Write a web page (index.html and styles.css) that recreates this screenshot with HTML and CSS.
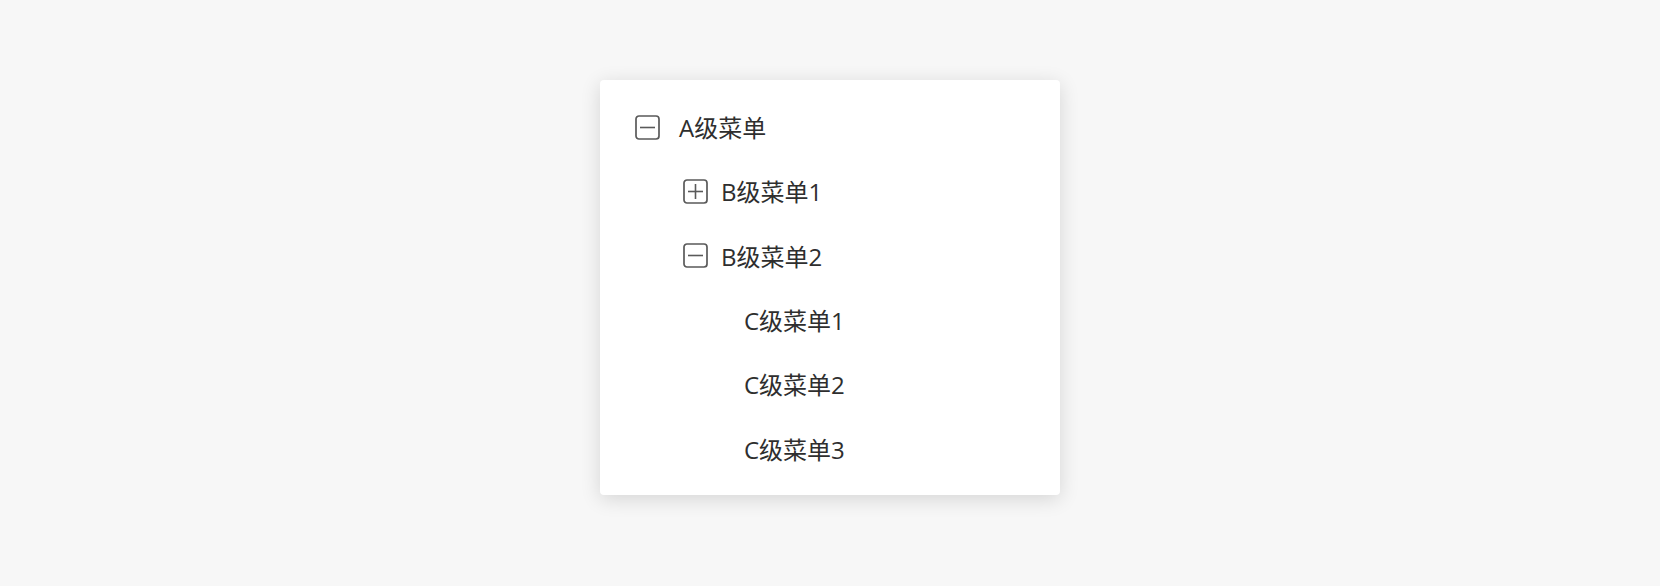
FILE: index.html
```html
<!DOCTYPE html>
<html lang="zh-CN">
<head>
<meta charset="utf-8">
<title>树形菜单</title>
<link rel="stylesheet" href="styles.css">
</head>
<body>
<div class="page">
  <div class="tree">
    <div class="row level-a">
      <span class="toggle">
        <svg viewBox="0 0 25 25" width="25" height="25"><rect x="1" y="1" width="23" height="23" rx="3" ry="3" fill="none" stroke="#5a5a5a" stroke-width="1.7"/><line x1="5" y1="12.5" x2="20" y2="12.5" stroke="#5a5a5a" stroke-width="1.6"/></svg>
      </span>
      <span class="label">A级菜单</span>
    </div>
    <div class="row level-b">
      <span class="toggle">
        <svg viewBox="0 0 25 25" width="25" height="25"><rect x="1" y="1" width="23" height="23" rx="3" ry="3" fill="none" stroke="#5a5a5a" stroke-width="1.7"/><line x1="5" y1="12.5" x2="20" y2="12.5" stroke="#5a5a5a" stroke-width="1.6"/><line x1="12.5" y1="5" x2="12.5" y2="20" stroke="#5a5a5a" stroke-width="1.6"/></svg>
      </span>
      <span class="label">B级菜单1</span>
    </div>
    <div class="row level-b">
      <span class="toggle">
        <svg viewBox="0 0 25 25" width="25" height="25"><rect x="1" y="1" width="23" height="23" rx="3" ry="3" fill="none" stroke="#5a5a5a" stroke-width="1.7"/><line x1="5" y1="12.5" x2="20" y2="12.5" stroke="#5a5a5a" stroke-width="1.6"/></svg>
      </span>
      <span class="label">B级菜单2</span>
    </div>
    <div class="row level-c"><span class="label">C级菜单1</span></div>
    <div class="row level-c"><span class="label">C级菜单2</span></div>
    <div class="row level-c"><span class="label">C级菜单3</span></div>
  </div>
</div>
</body>
</html>
```
FILE: styles.css
```css
html, body {
  margin: 0;
  padding: 0;
  background: #f7f7f7;
}

.page {
  width: 1660px;
  height: 586px;
  display: flex;
  justify-content: center;
  align-items: flex-start;
  padding-top: 80px;
  box-sizing: border-box;
}

.tree {
  width: 460px;
  height: 415px;
  box-sizing: border-box;
  padding: 15px 0 14px 35px;
  background: #ffffff;
  border-radius: 4px;
  box-shadow: 0 4px 20px rgba(0, 0, 0, 0.14);
  font-family: "Open Sans", "Noto Sans CJK SC", sans-serif;
  font-size: 24px;
  color: #2e2e2e;
  display: flex;
  flex-direction: column;
}

.row {
  height: 64.33px;
  display: flex;
  align-items: center;
}

.toggle {
  width: 25px;
  height: 25px;
  display: flex;
  flex: none;
}

.toggle svg {
  display: block;
}

.level-a .toggle {
  margin-right: 19px;
}

.level-b {
  padding-left: 48px;
}

.level-b .toggle {
  margin-right: 13px;
}

.level-c {
  padding-left: 109px;
}

.label {
  line-height: 1;
  white-space: nowrap;
  margin-top: 2px;
}
```
